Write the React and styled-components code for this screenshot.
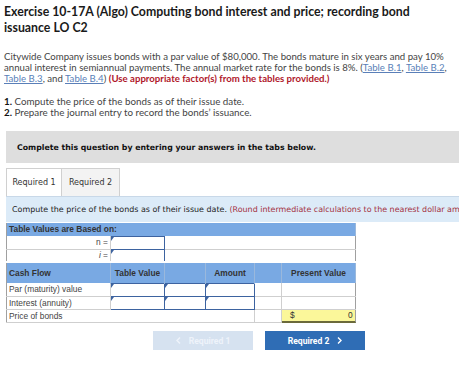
import React from "react";
import styled, { createGlobalStyle } from "styled-components";

const GlobalStyle = createGlobalStyle`
  body {
    margin: 0;
    background: #fff;
  }
`;

const Page = styled.div`
  width: 474px;
  height: 377px;
  overflow: hidden;
  padding: 4px 0 0 4px;
  box-sizing: border-box;
  font-family: "Lato", "Liberation Sans", sans-serif;
`;

const Title = styled.h1`
  margin: 0;
  font-family: "Lato", sans-serif;
  font-size: 12.3px;
  font-weight: 700;
  line-height: 16px;
  color: #1a1a1a;
`;

const Para = styled.p`
  margin: 15px 0 0;
  font-size: 9.65px;
  line-height: 11px;
  color: #444;
  white-space: nowrap;
`;

const TableLink = styled.a`
  color: #5a7fb8;
  text-decoration: underline;
`;

const Warn = styled.strong`
  color: #b0172b;
  font-weight: 700;
`;

const Steps = styled.ol`
  list-style: none;
  margin: 12px 0 0;
  padding: 0;
  font-size: 9.8px;
  line-height: 11px;
  color: #444;
  b {
    color: #111;
  }
`;

const Notice = styled.div`
  margin: 13px 0 0 2px;
  width: 453px;
  height: 32px;
  background: #dedede;
  display: flex;
  align-items: center;
  padding-left: 11px;
  box-sizing: border-box;
  font-family: "DejaVu Sans", Verdana, sans-serif;
  font-weight: 700;
  font-size: 7.8px;
  color: #111;
`;

const Tabs = styled.div`
  display: flex;
  margin: 5px 0 0 2px;
  height: 28px;
`;

const Tab = styled.div`
  width: ${({ w }) => w}px;
  box-sizing: border-box;
  display: flex;
  align-items: center;
  justify-content: center;
  font-family: "DejaVu Sans", Verdana, sans-serif;
  font-size: 8px;
  color: #333;
  border: 1px solid #d0d0d0;
  border-bottom: none;
  background: ${({ active }) => (active ? "#fff" : "#f3f3f3")};
  border-left: ${({ active }) => (active ? "1px solid #d0d0d0" : "none")};
`;

const Panel = styled.div`
  margin-left: 2px;
  width: 453px;
  overflow: hidden;
`;

const Instruction = styled.div`
  height: 25px;
  background: #dcebf8;
  border-top: 1px solid #c8d8e8;
  display: flex;
  align-items: center;
  padding-left: 6px;
  white-space: nowrap;
  font-family: "DejaVu Sans", Verdana, sans-serif;
  font-size: 7.95px;
  color: #222;
  span {
    color: #a33040;
  }
`;

const Grid = styled.table`
  margin-top: 1px;
  border-collapse: collapse;
  table-layout: fixed;
  width: 349px;
  font-family: "Liberation Sans", Arial, sans-serif;
  font-size: 8.4px;
  color: #333;
  td {
    padding: 0 2px;
    box-sizing: border-box;
  }
`;

const BlueRow = styled.tr`
  background: #79a9e3;
  td {
    border-right: 1px solid #9ab8dc;
    border-left: 1px solid #9ab8dc;
    border-top: ${({ gap }) => (gap ? "2px solid #fff" : "none")};
    height: ${({ h }) => h}px;
    font-weight: 700;
    color: #333;
    text-align: center;
  }
  td:first-child {
    text-align: left;
    border-left: 1px solid #a0a0a0;
  }
`;

const Row = styled.tr`
  td {
    height: 13px;
    border-bottom: 1px solid #cfcfcf;
    border-right: 1px solid #cfcfcf;
    white-space: nowrap;
  }
  td:first-child {
    border-left: 1px solid #a0a0a0;
  }
  td:last-child {
    border-right: 1px solid #a0a0a0;
  }
`;

const Label = styled.td`
  text-align: ${({ right }) => (right ? "right" : "left")};
  color: #444;
`;

const Entry = styled.td`
  position: relative;
  border: 1.5px solid #3d63a0 !important;
  &::before {
    content: "";
    position: absolute;
    left: 0;
    top: 0;
    border-top: 4px solid #3d63a0;
    border-right: 3px solid transparent;
  }
`;

const Total = styled.td`
  background: #fbf79a;
  border-bottom: 2px solid #6b6a3a !important;
  display: flex;
  justify-content: space-between;
  align-items: center;
  color: #333;
`;

const Buttons = styled.div`
  display: flex;
  gap: 12px;
  margin: 8px 0 0 149px;
`;

const NavButton = styled.button`
  width: 100px;
  height: 19px;
  border: none;
  display: flex;
  align-items: center;
  justify-content: center;
  gap: 8px;
  font-family: "Roboto", "Liberation Sans", sans-serif;
  font-weight: 700;
  font-size: 8.6px;
  color: ${({ disabled }) => (disabled ? "#eef3fa" : "#fff")};
  background: ${({ disabled }) => (disabled ? "#d6e2f0" : "#2f6db5")};
  padding: 0;
`;

const Chevron = ({ dir }) => (
  <svg width="5" height="7" viewBox="0 0 5 7">
    <path
      d={dir === "left" ? "M4 0.5 L1 3.5 L4 6.5" : "M1 0.5 L4 3.5 L1 6.5"}
      fill="none"
      stroke="currentColor"
      strokeWidth="1.4"
    />
  </svg>
);

export default function App() {
  return (
    <>
      <GlobalStyle />
      <Page>
        <Title>
          Exercise 10-17A (Algo) Computing bond interest and price; recording bond
          <br />
          issuance LO C2
        </Title>
        <Para>
          Citywide Company issues bonds with a par value of $80,000. The bonds mature in six years and pay 10%
          <br />
          annual interest in semiannual payments. The annual market rate for the bonds is 8%. (
          <TableLink>Table B.1</TableLink>, <TableLink>Table B.2</TableLink>,
          <br />
          <TableLink>Table B.3</TableLink>, and <TableLink>Table B.4</TableLink>){" "}
          <Warn>(Use appropriate factor(s) from the tables provided.)</Warn>
        </Para>
        <Steps>
          <li>
            <b>1.</b> Compute the price of the bonds as of their issue date.
          </li>
          <li>
            <b>2.</b> Prepare the journal entry to record the bonds’ issuance.
          </li>
        </Steps>
        <Notice>Complete this question by entering your answers in the tabs below.</Notice>
        <Tabs>
          <Tab w={56} active>
            Required 1
          </Tab>
          <Tab w={58}>Required 2</Tab>
        </Tabs>
        <Panel>
          <Instruction>
            Compute the price of the bonds as of their issue date.&nbsp;
            <span>(Round intermediate calculations to the nearest dollar amount.)</span>
          </Instruction>
          <Grid>
            <colgroup>
              <col style={{ width: 104 }} />
              <col style={{ width: 54 }} />
              <col style={{ width: 41 }} />
              <col style={{ width: 49 }} />
              <col style={{ width: 27 }} />
              <col style={{ width: 74 }} />
            </colgroup>
            <tbody>
              <BlueRow h={13}>
                <td colSpan={6}>Table Values are Based on:</td>
              </BlueRow>
              <Row>
                <Label right>n =</Label>
                <Entry />
                <td colSpan={4} />
              </Row>
              <Row>
                <Label right>
                  <i>i</i> =
                </Label>
                <Entry />
                <td colSpan={4} />
              </Row>
              <BlueRow h={21} gap>
                <td>Cash Flow</td>
                <td>Table Value</td>
                <td />
                <td>Amount</td>
                <td />
                <td>Present Value</td>
              </BlueRow>
              <Row>
                <Label>Par (maturity) value</Label>
                <Entry />
                <Entry />
                <Entry />
                <td />
                <td />
              </Row>
              <Row>
                <Label>Interest (annuity)</Label>
                <Entry />
                <Entry />
                <Entry />
                <td />
                <td />
              </Row>
              <Row>
                <Label colSpan={4}>Price of bonds</Label>
                <td />
                <Total>
                  <span style={{ paddingLeft: 6 }}>$</span>
                  <span>0</span>
                </Total>
              </Row>
            </tbody>
          </Grid>
        </Panel>
        <Buttons>
          <NavButton disabled>
            <Chevron dir="left" /> Required 1
          </NavButton>
          <NavButton>
            Required 2 <Chevron dir="right" />
          </NavButton>
        </Buttons>
      </Page>
    </>
  );
}
